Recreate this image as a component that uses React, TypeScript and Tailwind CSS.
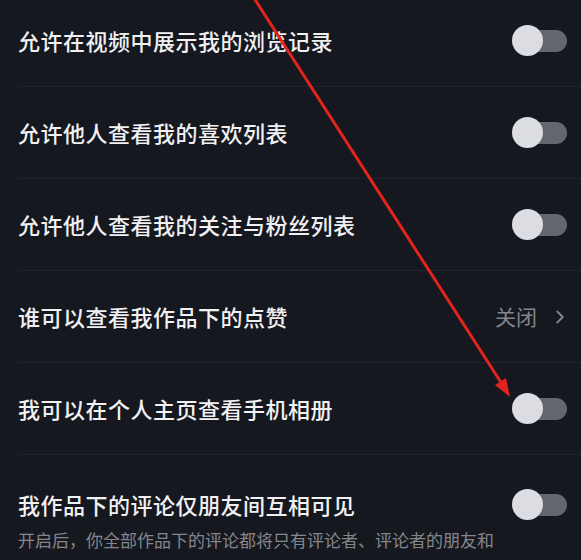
import React from "react";
import { ChevronRight } from "lucide-react";

type Row = {
  title: string;
  value?: string;
};

const rows: Row[] = [
  { title: "允许在视频中展示我的浏览记录" },
  { title: "允许他人查看我的喜欢列表" },
  { title: "允许他人查看我的关注与粉丝列表" },
  { title: "谁可以查看我作品下的点赞", value: "关闭" },
  { title: "我可以在个人主页查看手机相册" },
];

const Toggle: React.FC = () => (
  <div className="relative w-[55px] h-[32px] flex items-center">
    <div className="absolute left-[4px] right-0 h-[22px] rounded-full bg-[#64666d]" />
    <div className="relative w-[31px] h-[31px] rounded-full bg-[#dcdde2]" />
  </div>
);

const App: React.FC = () => {
  return (
    <div
      className="relative w-[581px] h-[560px] overflow-hidden bg-[#161820] text-[#f1f1f3]"
      style={{ fontFamily: '"Noto Sans CJK SC", "Noto Sans", sans-serif' }}
    >
      <div className="mt-[-5px] pl-[18px]">
        {rows.map((r) => (
          <div
            key={r.title}
            className="h-[92px] flex items-center justify-between border-b border-[#21232a] pr-[14px]"
          >
            <span className="text-[22px] font-medium tracking-[0.5px]">{r.title}</span>
            {r.value ? (
              <div className="flex items-center gap-[12px] mr-[-4px] text-[#85868c]">
                <span className="text-[21px]">{r.value}</span>
                <ChevronRight size={22} strokeWidth={2} />
              </div>
            ) : (
              <Toggle />
            )}
          </div>
        ))}
        <div className="pt-[33px] pr-[14px]">
          <div className="flex items-center justify-between">
            <span className="text-[22px] font-medium tracking-[0.5px]">我作品下的评论仅朋友间互相可见</span>
            <Toggle />
          </div>
          <p className="mt-[6px] text-[17px] text-[#85868c] whitespace-nowrap">
            开启后，你全部作品下的评论都将只有评论者、评论者的朋友和
          </p>
        </div>
      </div>

      {/* annotation arrow drawn over the list */}
      <svg className="absolute inset-0 pointer-events-none" width="581" height="560">
        <line x1="254" y1="-2" x2="502" y2="384" stroke="#e2241c" strokeWidth="3" />
        <polygon points="510,397 506,378 495,385" fill="#e2241c" />
      </svg>
    </div>
  );
};

export default App;
